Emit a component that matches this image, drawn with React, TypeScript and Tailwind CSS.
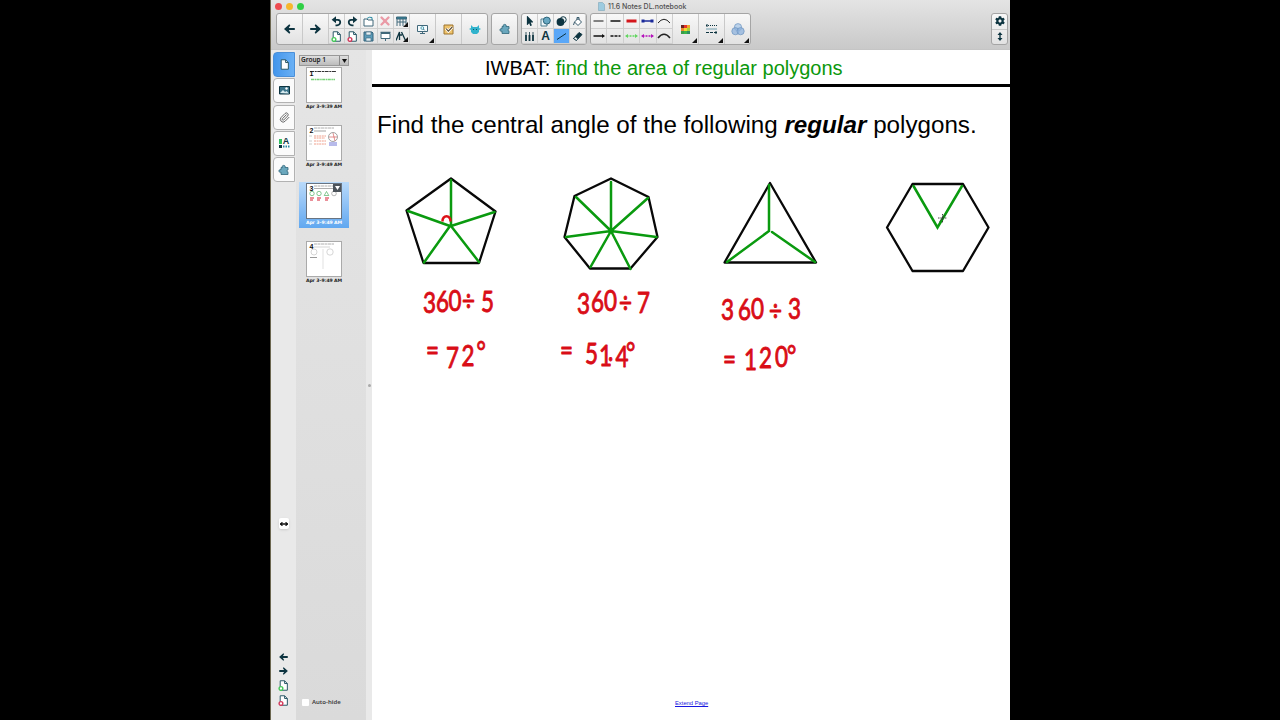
import type { ReactNode } from "react";
import { MoveHorizontal, Paperclip, X } from "lucide-react";
import { FaCog, FaMousePointer } from "react-icons/fa";

const NAVY = "#0d3440";

function PageIcon({ badge, size = 10 }: { badge?: string; size?: number }) {
  return (
    <svg width={size} height={size} viewBox="0 0 10 10">
      <path d="M2 .7h4l2.5 2.5v6.1H2z" fill="#fff" stroke="#285766" strokeWidth=".9" />
      <path d="M6 .7v2.5h2.5" fill="none" stroke="#285766" strokeWidth=".9" />
      {badge && <circle cx="2.7" cy="7.7" r="1.7" fill="#fff" stroke={badge} strokeWidth="1.3" />}
    </svg>
  );
}

function Ico({ children, w = 11, h = 11 }: { children: ReactNode; w?: number; h?: number }) {
  return (
    <svg width={w} height={h} viewBox={`0 0 ${w} ${h}`} fill="none" stroke={NAVY} strokeWidth="1">
      {children}
    </svg>
  );
}

function BoldArrow({ right, small }: { right?: boolean; small?: boolean }) {
  return (
    <svg width={small ? 9 : 11} height={small ? 8 : 10} viewBox="0 0 11 10" className={right ? "-scale-x-100" : ""}>
      <path d="M0 5L5.300 .3 6.300 1.300 4.800 3.900H10.800V6.100H4.800L6.300 8.700 5.300 9.700z" fill={NAVY} />
    </svg>
  );
}

function HookArrow({ flip }: { flip?: boolean }) {
  return (
    <svg width="11" height="11" viewBox="0 0 11 11" className={flip ? "-scale-x-100" : ""}>
      <path d="M3.500 3.800H6.800C10.300 4 10 8.900 6 9.300H4.500" fill="none" stroke={NAVY} strokeWidth="1.800" />
      <path d="M.6 3.800L5 .3V7.300z" fill={NAVY} />
    </svg>
  );
}

function Puzzle() {
  return (
    <svg width="12" height="12" viewBox="0 0 12 12">
      <path
        d="M4.200 2.800C3.800.9 7.600.9 7.200 2.800L7 3.500H10V6L9.300 6.200C8.600 6.800 8.800 7.800 10 7.800V10.500H3V8.200C.2 9 .2 5 3 5.700V3.500H4.500z"
        fill="#6aa7bd"
        stroke="#2f6579"
        strokeWidth=".8"
      />
    </svg>
  );
}

function Corner() {
  return (
    <svg className="absolute right-px bottom-px" width="5" height="5" viewBox="0 0 5 5">
      <path d="M5 0v5H0z" fill="#111" />
    </svg>
  );
}

function Group({ children, className = "" }: { children: ReactNode; className?: string }) {
  return (
    <div
      className={`flex h-8 shrink-0 overflow-hidden rounded-[3px] border border-[#a5a5a5] bg-gradient-to-b from-[#f8f8f8] to-[#e2e2e2] ${className}`}
    >
      {children}
    </div>
  );
}

function Big({ children, menu, last }: { children: ReactNode; menu?: boolean; last?: boolean }) {
  return (
    <div className={`relative flex flex-1 items-center justify-center ${last ? "" : "border-r border-[#c9c9c9]"}`}>
      {children}
      {menu && <Corner />}
    </div>
  );
}

function Small({ children, active, menu }: { children: ReactNode; active?: boolean; menu?: boolean }) {
  return (
    <div
      className={`relative flex items-center justify-center border-r border-b border-[#cfcfcf] ${active ? "bg-[#5aa7f7]" : ""}`}
    >
      {children}
      {menu && <Corner />}
    </div>
  );
}

type LineSampleProps = { color?: string; width?: number; dash?: string; start?: boolean; end?: boolean; dots?: boolean };

function LineSample({ color = "#111", width = 1, dash, start, end, dots }: LineSampleProps) {
  return (
    <svg width="13" height="6" viewBox="0 0 13 6">
      <path d="M1.500 3h10" stroke={color} strokeWidth={width} strokeDasharray={dash} />
      {start && <path d="M0 3l3-2v4z" fill={color} />}
      {end && <path d="M13 3l-3-2v4z" fill={color} />}
      {dots && <path d="M.5 1.500h3v3h-3zM9.500 1.500h3v3h-3z" fill={color} />}
    </svg>
  );
}

function Arc({ weight }: { weight: number }) {
  return (
    <svg width="14" height="8" viewBox="0 0 14 8">
      <path d="M1 6Q7 -1.500 13 6" fill="none" stroke="#222" strokeWidth={weight} />
    </svg>
  );
}

function Toolbar() {
  return (
    <div className="flex h-[37px] items-start pl-[5px]">
      <Group className="w-[212px]">
        <div className="flex w-[52px]">
          <Big><BoldArrow /></Big>
          <Big><BoldArrow right /></Big>
        </div>
        <div className="grid w-[81px] grid-cols-5 grid-rows-2">
          <Small><HookArrow /></Small>
          <Small><HookArrow flip /></Small>
          <Small>
            <Ico>
              <path d="M1 3h3l1 1h5v6H1z" fill="#fff" stroke="#41687a" />
              <path d="M4 2.500Q6 .5 9 1.500V4" stroke="#2c8ba3" />
            </Ico>
          </Small>
          <Small><X size={14} strokeWidth={4} color="#ea9aa6" /></Small>
          <Small menu>
            <Ico>
              <path d="M.5 1h10v2H.5z" fill="#2c7d96" stroke="#41687a" />
              <path d="M1 3v7M4 3v7M7 3v7M10 3v5M1 6h9" stroke="#41687a" />
            </Ico>
          </Small>
          <Small><PageIcon badge="#46c95a" size={11} /></Small>
          <Small><PageIcon badge="#d43b5c" size={11} /></Small>
          <Small>
            <Ico>
              <path d="M1 1h8l1 1v8H1z" fill="#5b9bb8" stroke="#35637a" />
              <path d="M3 1h5v3H3zM3 7h5v3H3z" fill="#e6f0f4" stroke="#35637a" strokeWidth=".6" />
            </Ico>
          </Small>
          <Small>
            <Ico>
              <path d="M1 2.500h9v5H1z" fill="#fff" stroke="#41687a" />
              <path d="M.5 1.500h10" stroke="#41687a" strokeWidth="1.500" />
              <path d="M5.500 7.500V10" stroke="#41687a" />
            </Ico>
          </Small>
          <Small menu>
            <Ico>
              <path d="M0 9.500L3.500 1V9M5.500 1L9.500 9.500M4 4h2" strokeWidth="1.300" />
            </Ico>
          </Small>
        </div>
        <div className="flex flex-1">
          <Big menu>
            <Ico>
              <path d="M.5 1.500h10v6H.5z" fill="#f5fbfd" stroke="#41687a" />
              <circle cx="5.300" cy="4" r="1.400" stroke="#2c8ba3" strokeWidth=".8" />
              <path d="M6.300 5l1.300 1.300M5.500 7.500V9M3 9.500h5" stroke="#41687a" />
            </Ico>
          </Big>
          <Big>
            <Ico>
              <path d="M1 1h9v9H1z" fill="#efc36b" stroke="#9c7431" />
              <path d="M3 4.500l2.300 2.700L9.300 3" stroke="#fff" strokeWidth="2.600" />
              <path d="M3 4.500l2.300 2.700L9.300 3" stroke="#5a4a30" strokeWidth="1.100" />
            </Ico>
          </Big>
          <Big last>
            <Ico w={12}>
              <path d="M2 1l2 2h4l2-2v3l2 1-2 1v2L8 10H4L2 8V6L0 5l2-1z" fill="#31b3cc" stroke="none" />
              <path d="M4 5.500h1M7 5.500h1" stroke="#0e5566" />
            </Ico>
          </Big>
        </div>
      </Group>

      <Group className="ml-[3px] w-[27px]">
        <Big last><Puzzle /></Big>
      </Group>

      <Group className="ml-[3px] w-[66px]">
        <div className="grid flex-1 grid-cols-4 grid-rows-2">
          <Small><FaMousePointer size={10} color={NAVY} /></Small>
          <Small>
            <Ico>
              <path d="M1 3h6v7H1z" fill="#eef6f9" stroke="#4e7e90" />
              <circle cx="6.800" cy="4.600" r="3.500" fill="#68a8c2" stroke="#2d6379" />
            </Ico>
          </Small>
          <Small>
            <Ico>
              <circle cx="7.200" cy="3.700" r="3" fill="#e9eff1" />
              <circle cx="4.500" cy="6" r="3.900" fill={NAVY} stroke="none" />
            </Ico>
          </Small>
          <Small>
            <Ico>
              <path d="M2.500 6L6 2.500 9.500 6 6 9.500zM5 4V1.500h2v2.500M2.500 6l-1 3" fill="#fff" stroke="#36596a" />
            </Ico>
          </Small>
          <Small>
            <Ico>
              <path d="M2 4v6M5.500 4v6M9 4v6" strokeWidth="1.800" />
              <path d="M2 1v3M5.500 1v3M9 1v3" strokeWidth=".8" />
            </Ico>
          </Small>
          <Small><span className="text-[12px] leading-none font-black text-[#0d3440]">A</span></Small>
          <Small active>
            <Ico><path d="M1 8.500L10 2.500" /></Ico>
          </Small>
          <Small>
            <Ico>
              <path d="M1.500 7.500L7 1.500l3 2-5.500 6z" fill={NAVY} stroke={NAVY} strokeLinejoin="round" />
              <path d="M1.700 7.600l2.800 1.800L6 7.800 3.200 5.800z" fill="#f4f8f9" strokeWidth=".7" />
            </Ico>
          </Small>
        </div>
      </Group>

      <Group className="ml-[3px] w-[161px]">
        <div className="grid w-[82px] grid-cols-5 grid-rows-2">
          <Small><LineSample /></Small>
          <Small><LineSample width={1.4} /></Small>
          <Small><LineSample color="#d4151b" width={3} /></Small>
          <Small><LineSample color="#1b2a9a" width={1.4} dots /></Small>
          <Small><Arc weight={1} /></Small>
          <Small><LineSample width={1.3} end /></Small>
          <Small><LineSample width={1.4} dash="3 1" /></Small>
          <Small><LineSample color="#62d660" width={1.4} dash="2 1" start end /></Small>
          <Small><LineSample color="#b511bb" width={1.4} dash="2 1" start end /></Small>
          <Small><Arc weight={1.5} /></Small>
        </div>
        <div className="flex flex-1">
          <Big menu>
            <div className="grid grid-cols-3">
              <i className="size-[3px] bg-[#6b2222]" /><i className="size-[3px] bg-[#e5342c]" /><i className="size-[3px] bg-[#f0a72a]" />
              <i className="size-[3px] bg-[#eb8a2c]" /><i className="size-[3px] bg-[#f1d735]" /><i className="size-[3px] bg-[#a9cf38]" />
              <i className="size-[3px] bg-[#3a9d48]" /><i className="size-[3px] bg-[#39b54a]" /><i className="size-[3px] bg-[#2e8f62]" />
            </div>
          </Big>
          <Big menu>
            <Ico>
              <path d="M0 1.500h11" strokeDasharray="1 1" />
              <path d="M0 5h11" stroke="#6e9dad" />
              <path d="M0 8.500h11" strokeDasharray="3 1" />
              <path d="M1 0v3M10 7v3" />
            </Ico>
          </Big>
          <Big menu last>
            <Ico w={14} h={13}>
              <g stroke="#6d94bf" strokeWidth=".7" fillOpacity=".75">
                <circle cx="7" cy="4.200" r="3.600" fill="#a9c8e8" />
                <circle cx="4.400" cy="8.200" r="3.600" fill="#8db2dc" />
                <circle cx="9.600" cy="8.200" r="3.600" fill="#8db2dc" />
              </g>
            </Ico>
          </Big>
        </div>
      </Group>

      <Group className="mr-0.5 ml-auto w-[17px] flex-col">
        <div className="flex flex-1 items-center justify-center border-b border-[#c9c9c9]">
          <FaCog size={10} color={NAVY} />
        </div>
        <div className="flex flex-1 items-center justify-center">
          <svg width="6" height="9" viewBox="0 0 6 9">
            <path d="M3 0l2.500 3h-5zM3 9L.5 6h5zM2.300 2.500h1.400v4H2.300z" fill={NAVY} />
          </svg>
        </div>
      </Group>
    </div>
  );
}

function TitleBar() {
  return (
    <div className="flex h-[13px] items-center">
      <div className="flex w-[337px] items-center gap-1 pl-1">
        <i className="size-[7px] rounded-full bg-[#ee4b50]" />
        <i className="size-[7px] rounded-full bg-[#f6b62c]" />
        <i className="size-[7px] rounded-full bg-[#2fcf45]" />
        <span className="ml-auto flex pr-[3px]">
          <svg width="7" height="9" viewBox="0 0 7 9">
            <path d="M.5.5h4l2 2v6h-6z" fill="#9dcbe0" stroke="#86aebf" strokeWidth=".7" />
          </svg>
        </span>
      </div>
      <span className="font-['Inter'] text-[7px] leading-none font-medium whitespace-nowrap text-[#505050]">11.6 Notes DL.notebook</span>
    </div>
  );
}

function Tab({ children, active }: { children: ReactNode; active?: boolean }) {
  return (
    <div
      className={`flex h-[25px] w-[22px] items-center justify-center rounded-l-[4px] border ${
        active ? "border-[#4a8fd8] bg-gradient-to-r from-[#4396ec] to-[#69b0f5]" : "border-[#b2b2b2] bg-[#fbfbfb]"
      }`}
    >
      {children}
    </div>
  );
}

function TabRail() {
  return (
    <div className="flex w-[25px] flex-col bg-[#e9e9e9] pt-[2px] pl-[2px]">
      <div className="flex flex-col gap-[1.3px]">
        <Tab active><PageIcon size={11} /></Tab>
        <Tab>
          <Ico>
            <path d="M.5 1.500h10v7.500H.5z" fill="#3a7389" stroke={NAVY} />
            <path d="M1 8l3-3 2 2 1.500-1L10 8.500z" fill="#d5e9ee" stroke="none" />
            <circle cx="7.500" cy="3.500" r="1.200" fill="#fff" stroke="none" />
          </Ico>
        </Tab>
        <Tab><Paperclip size={11} strokeWidth={2} color="#5c5c5c" /></Tab>
        <Tab>
          <div className="flex items-end gap-px">
            <svg width="3" height="9" viewBox="0 0 3 9">
              <path d="M1.500 0v5" stroke="#31c061" strokeWidth="3" />
              <path d="M1.500 6v3" stroke={NAVY} strokeWidth="3" />
            </svg>
            <span className="flex flex-col items-center">
              <span className="text-[9px] leading-[7px] font-black text-[#0d3440]">A</span>
              <svg width="7" height="3" viewBox="0 0 7 3"><path d="M0 1.500h7" stroke="#2c8ba3" strokeWidth="2" strokeDasharray="1.500 1" /></svg>
            </span>
          </div>
        </Tab>
        <Tab><Puzzle /></Tab>
      </div>
      <div className="mt-[336px] ml-[6px] flex h-[11px] w-[10px] items-center justify-center rounded-[2px] bg-white shadow-sm">
        <MoveHorizontal size={8} strokeWidth={4} color="#111" />
      </div>
      <div className="mt-[124px] ml-[5px] flex w-[11px] flex-col items-center gap-[4px]">
        <BoldArrow small />
        <span className="mt-[2px] flex"><BoldArrow right small /></span>
        <span className="mt-px flex"><PageIcon badge="#46c95a" size={11} /></span>
        <PageIcon badge="#d43b5c" size={11} />
      </div>
    </div>
  );
}

const SLIDES = [
  { time: "Apr 3–9:39 AM" },
  { time: "Apr 3–9:49 AM" },
  { time: "Apr 3–9:49 AM" },
  { time: "Apr 3–9:49 AM" },
];

function SlidePreview({ index }: { index: number }) {
  return (
    <svg width="33" height="33" viewBox="0 0 33 33" fill="none" strokeWidth=".6">
      {index === 0 && (
        <>
          <path d="M3 3.500h26" stroke="#333" strokeWidth="1.100" strokeDasharray="4 .7 2 .6" />
          <path d="M4 11.500h24" stroke="#77d377" strokeWidth="1.300" strokeDasharray="3 .6 1.500 .5" />
        </>
      )}
      {index > 0 && <path d="M7 2h20" stroke="#999" strokeWidth=".8" strokeDasharray="3 .5" />}
      {index === 1 && (
        <>
          <path d="M7 5h12" stroke="#666" />
          <path d="M7 10h12M7 12h11M7 15h12M7 18h12" stroke="#f0a08c" strokeWidth="1" strokeDasharray="2 .6" />
          <circle cx="26" cy="11" r="4.500" stroke="#666" />
          <path d="M22 11h8M26 7l2 8" stroke="#d04848" />
          <path d="M22 17h8M22 19h8" stroke="#7379d8" strokeWidth="1.200" />
          <path d="M2 10h3M2 15h3M2 18h3" stroke="#aaa" />
        </>
      )}
      {index === 2 && (
        <>
          <path d="M7 4.500h20" stroke="#777" />
          <circle cx="5" cy="9.500" r="2.200" stroke="#35a34b" />
          <circle cx="12" cy="9.500" r="2.200" stroke="#35a34b" />
          <path d="M19.500 7.500l2.300 4h-4.600z" stroke="#35a34b" />
          <circle cx="27" cy="9.500" r="2.300" stroke="#888" />
          <path d="M3 14h4M3 16h3M10 14h4M10 16h3M18 14h4M18 16h3" stroke="#d62336" strokeWidth="1.200" />
        </>
      )}
      {index === 3 && (
        <>
          <path d="M7 5h16" stroke="#bbb" />
          <circle cx="7" cy="10" r="3" stroke="#bbb" />
          <circle cx="23" cy="10" r="3.200" stroke="#bbb" />
          <path d="M16 7v20" stroke="#ccc" />
          <path d="M3 15.500h7" stroke="#555" />
        </>
      )}
      <text x="2.500" y={index === 0 ? 8 : 7} fontSize="7" fontWeight="700" fill="#111">
        {index + 1}
      </text>
    </svg>
  );
}

function PageSorter() {
  return (
    <div className="flex w-[70px] flex-col bg-gradient-to-b from-[#e5e5e5] to-[#dadada] pt-[5px]">
      <div className="ml-[3px] flex h-[11px] w-[50px] items-center justify-between border border-[#999] bg-gradient-to-b from-[#dedede] to-[#bcbcbc] pl-px">
        <span className="font-['Noto_Sans'] text-[6.500px] leading-none font-semibold text-[#1b1b1b]">Group 1</span>
        <span className="flex h-full w-[9px] items-center justify-center border-l border-[#8b8b8b]">
          <svg width="5" height="4" viewBox="0 0 5 4"><path d="M0 0h5L2.500 4z" fill="#111" /></svg>
        </span>
      </div>
      <div className="flex flex-col gap-3">
        {SLIDES.map((slide, i) => (
          <div
            key={i}
            className={`ml-[3px] flex h-[46px] w-[50px] flex-col items-center pt-px ${
              i === 2 ? "bg-gradient-to-b from-[#b9dafa] to-[#61a8f0] text-white" : "text-[#1c1c1c]"
            }`}
          >
            <div className={`relative size-9 shrink-0 border-[1.5px] bg-white ${i === 2 ? "border-[#687482]" : "border-[#aaa]"}`}>
              <SlidePreview index={i} />
              {i === 2 && (
                <span className="absolute top-0 right-0 flex size-[8px] items-center justify-center bg-[#4c535a]">
                  <svg width="5" height="4" viewBox="0 0 5 4"><path d="M0 0h5L2.500 4z" fill="#fff" /></svg>
                </span>
              )}
            </div>
            <span className="mt-px font-['DejaVu_Sans'] text-[4.6px] leading-[6px] font-bold tracking-[-0.1px] whitespace-nowrap">
              {slide.time}
            </span>
          </div>
        ))}
      </div>
      <div className="mt-auto mb-[13px] ml-[6px] flex items-center gap-[3px]">
        <i className="size-[7px] rounded-[1px] bg-white" />
        <span className="font-['Noto_Sans'] text-[6px] leading-[9px] font-semibold text-[#3c3c3c]">Auto-hide</span>
      </div>
    </div>
  );
}

const INK = [
  { text: "360÷5", xs: [423, 436, 448.5, 462, 481], ys: [313, 312, 311, 311, 312] },
  { text: "=72°", xs: [426, 446, 461.5, 476.5], ys: [360, 368, 366, 362] },
  { text: "360÷7", xs: [577, 591, 604, 619, 637], ys: [314, 312, 311, 313, 313] },
  { text: "=51.4°", xs: [560, 585, 599, 608, 615.5, 626], ys: [360, 364, 366, 361, 367, 363] },
  { text: "360÷3", xs: [721, 738, 751, 769, 788], ys: [320, 320, 319, 321, 319] },
  { text: "=120°", xs: [723, 744, 759, 775, 787], ys: [369, 370, 368, 367, 366] },
];

// narrows the digits of the handwriting
const INK_SQUEEZE = 0.8;

function Drawing() {
  return (
    <svg width="638" height="240" viewBox="372 150 638 240" fill="none" className="shrink-0">
      <g stroke="#080808" strokeWidth="2.300" strokeLinejoin="round">
        <path d="M451 178.500L495.500 211.500 479 263H423.500L406.500 210.500z" />
        <path d="M611 178.500L648.500 197 657.500 237 630.500 268.500H590L564.500 237 574.500 196z" />
        <path d="M770 183L816 262.500H724.500z" />
        <path d="M912.500 184H963L988.500 227.500 963 271H912.500L887 227.500z" />
      </g>
      <g stroke="#0a9a0f" strokeWidth="2.500" strokeLinecap="round">
        <path d="M451 180V225M451 226L494.500 212M451 226L479 262M450 226L424 262.500M450 226L408 211" />
        <path d="M611 182V231M611 231L648 198M611 231L656.500 237M611 231L630.500 269M611 231L590.500 267M611 231L566 237M611 231L576 197" />
        <path d="M769 185V231M769 231L727 262M772 232L815 262" />
        <path d="M913.500 186L937.500 227.500 962 186" />
      </g>
      <path d="M442.500 221.500C442 214.500 451 214.500 450.500 221.500" stroke="#dd1117" strokeWidth="2.500" />
      <path d="M938 218h9M942.500 214v9M939.500 221.500l6-7" stroke="#333" strokeWidth=".9" strokeDasharray="1.500 .8" />
      <g
        transform={`scale(${INK_SQUEEZE} 1)`}
        fill="#d90d16"
        stroke="#d90d16"
        strokeWidth=".9"
        strokeLinejoin="round"
        fontFamily="Lato, sans-serif"
        fontSize="28"
      >
        {INK.map((line) => (
          <text key={line.text} x={line.xs.map((x) => x / INK_SQUEEZE).join(" ")} y={line.ys.join(" ")}>
            {line.text}
          </text>
        ))}
      </g>
    </svg>
  );
}

function Slide() {
  return (
    <main className="flex min-w-0 flex-1 flex-col bg-white">
      <div className="flex h-[37px] items-center border-b-[3px] border-black pt-px pl-[113px] text-[20px] whitespace-pre text-black">
        IWBAT: <span className="text-[#0c980c]">find the area of regular polygons</span>
      </div>
      <h1 className="flex h-[63px] items-center pt-[13px] pl-[5px] text-[24.2px] whitespace-nowrap text-black">
        <span>
          Find the central angle of the following <b className="italic">regular</b> polygons.
        </span>
      </h1>
      <Drawing />
      <span className="mt-auto mb-[12px] ml-[303px] text-[5.8px] leading-[9px] text-[#1717e0] underline">Extend Page</span>
    </main>
  );
}

export default function App() {
  return (
    <div className="flex h-[720px] w-[1280px] overflow-hidden bg-black pl-[270px] font-['Liberation_Sans',sans-serif]">
      <div className="w-px bg-[#6b6650]" />
      <div className="flex w-[739px] flex-col">
        <header className="h-[50px] shrink-0 border-b border-[#c5c5c5] bg-gradient-to-b from-[#e4e4e4] to-[#c9c9c9]">
          <TitleBar />
          <Toolbar />
        </header>
        <div className="flex min-h-0 flex-1">
          <TabRail />
          <PageSorter />
          <div className="flex w-[6px] items-center justify-center bg-[#e9e9e9]">
            <i className="size-[3px] rounded-full bg-[#aaa]" />
          </div>
          <Slide />
        </div>
      </div>
    </div>
  );
}
